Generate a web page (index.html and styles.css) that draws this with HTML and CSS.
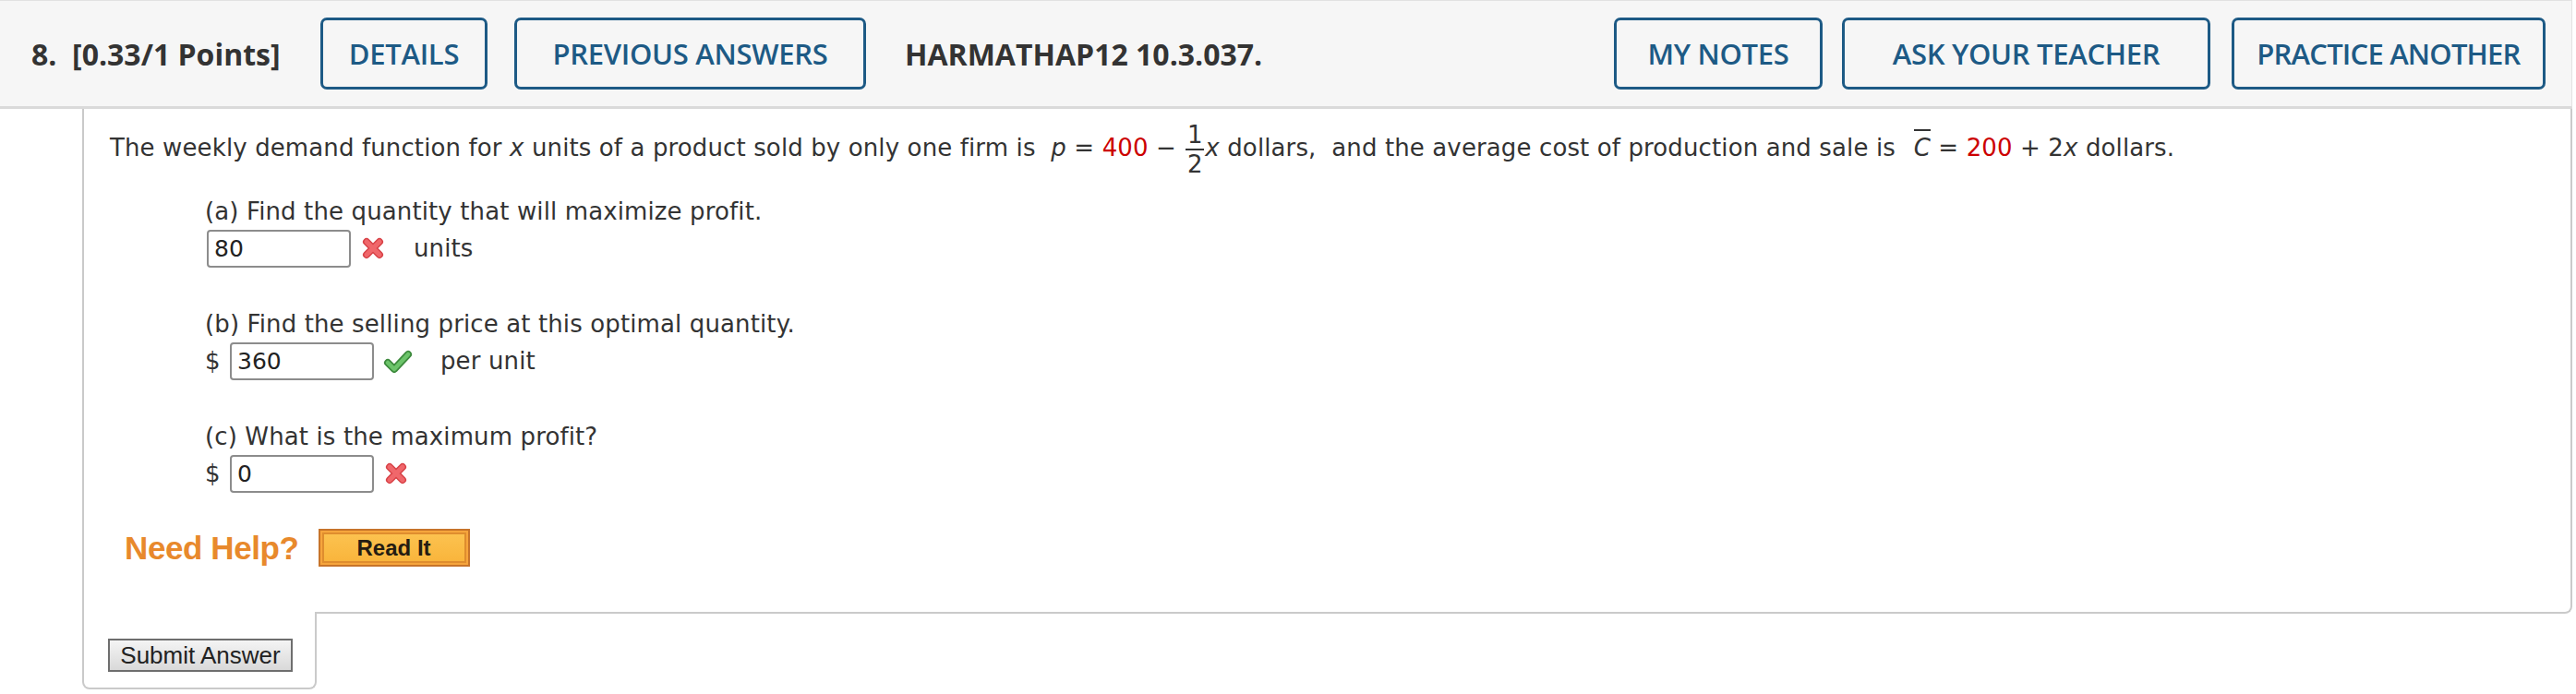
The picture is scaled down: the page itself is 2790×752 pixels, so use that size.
FILE: index.html
```html
<!DOCTYPE html>
<html lang="en">
<head>
<meta charset="utf-8">
<title>Question 8</title>
<link rel="stylesheet" href="styles.css">
</head>
<body>
<div class="page">
  <header class="qhead">
    <div class="qnum">8.&nbsp; [0.33/1 Points]</div>
    <button class="hbtn w-details">DETAILS</button>
    <button class="hbtn w-prev">PREVIOUS ANSWERS</button>
    <div class="qcode">HARMATHAP12 10.3.037.</div>
    <div class="spacer"></div>
    <button class="hbtn w-notes">MY NOTES</button>
    <button class="hbtn w-ask">ASK YOUR TEACHER</button>
    <button class="hbtn w-practice">PRACTICE ANOTHER</button>
  </header>

  <section class="qbox">
    <p class="stem">The weekly demand function for <i>x</i> units of a product sold by only one firm is&nbsp; <i>p</i> = <span class="red">400</span> &minus; <span class="frac"><span class="num">1</span><span class="bar"></span><span class="den">2</span></span><i>x</i> dollars,&nbsp; and the average cost of production and sale is&nbsp; <span class="cbar"><i>C</i></span> = <span class="red">200</span> + 2<i>x</i> dollars.</p>

    <div class="part">
      <div class="label">(a) Find the quantity that will maximize profit.</div>
      <div class="row">
        <input class="ans first" type="text" value="80" readonly>
        <svg class="mark x" viewBox="0 0 28 28" width="28" height="28"><path d="M7 7 L21 21 M21 7 L7 21" stroke="#d84348" stroke-width="8" stroke-linecap="round"/><path d="M7 7 L21 21 M21 7 L7 21" stroke="#f0676b" stroke-width="5" stroke-linecap="round"/></svg>
        <span class="unit">units</span>
      </div>
    </div>

    <div class="part gap">
      <div class="label">(b) Find the selling price at this optimal quantity.</div>
      <div class="row">
        <span class="dollar">$</span>
        <input class="ans" type="text" value="360" readonly>
        <svg class="mark chk" viewBox="0 0 32 28" width="32" height="28"><path d="M5 16 L12 23 L27 7" stroke="#3d8a3d" stroke-width="8" fill="none" stroke-linecap="round" stroke-linejoin="round"/><path d="M5 16 L12 23 L27 7" stroke="#6cc46a" stroke-width="4.5" fill="none" stroke-linecap="round" stroke-linejoin="round"/></svg>
        <span class="unit">per unit</span>
      </div>
    </div>

    <div class="part gap">
      <div class="label">(c) What is the maximum profit?</div>
      <div class="row">
        <span class="dollar">$</span>
        <input class="ans" type="text" value="0" readonly>
        <svg class="mark x" viewBox="0 0 28 28" width="28" height="28"><path d="M7 7 L21 21 M21 7 L7 21" stroke="#d84348" stroke-width="8" stroke-linecap="round"/><path d="M7 7 L21 21 M21 7 L7 21" stroke="#f0676b" stroke-width="5" stroke-linecap="round"/></svg>
      </div>
    </div>

    <div class="help">
      <span class="needhelp">Need Help?</span>
      <button class="readit"><span>Read It</span></button>
    </div>
  </section>

  <div class="subtab">
    <button class="submit">Submit Answer</button>
  </div>
</div>
</body>
</html>
```

FILE: styles.css
```css
html, body {
  margin: 0;
  padding: 0;
  background: #ffffff;
}

.page {
  width: 2786px;
}

.qhead {
  display: flex;
  align-items: center;
  height: 114px;
  padding: 0 28px 0 34px;
  background: #f6f6f6;
  border-top: 1px solid #e2e2e2;
  border-bottom: 3px solid #dadada;
  border-right: 1px solid #e2e2e2;
  font-family: "Open Sans", "Liberation Sans", sans-serif;
  font-weight: 700;
  font-size: 32px;
  color: #333333;
}

.qnum {
  width: 268px;
  white-space: nowrap;
  margin-right: 45px;
}

.hbtn {
  height: 78px;
  border: 3px solid #1d5a85;
  border-radius: 7px;
  background: transparent;
  color: #1d5a85;
  font-family: "Open Sans", "Liberation Sans", sans-serif;
  font-weight: 600;
  font-size: 31px;
  letter-spacing: -0.3px;
  padding: 0;
  text-align: center;
  white-space: nowrap;
}

.w-details { width: 181px; margin-right: 29px; }
.w-prev { width: 381px; margin-right: 42px; }
.w-notes { width: 226px; margin-right: 21px; }
.w-ask { width: 399px; margin-right: 23px; }
.w-practice { width: 340px; letter-spacing: -0.8px; }

.qcode {
  white-space: nowrap;
}

.spacer {
  flex: 1;
}

.qbox {
  margin-left: 89px;
  border: 2px solid #cacaca;
  border-top: none;
  border-bottom-right-radius: 8px;
  padding: 1px 28px 49px 28px;
  font-family: Verdana, "DejaVu Sans", sans-serif;
  font-size: 26px;
  letter-spacing: 0.12px;
  color: #333333;
}

.stem {
  margin: 0;
  height: 80px;
  line-height: 82px;
  white-space: nowrap;
}

.red {
  color: #cc0000;
}

.frac {
  display: inline-flex;
  flex-direction: column;
  align-items: center;
  vertical-align: middle;
  width: 20px;
  margin: 0 1px 0 2px;
  line-height: 30px;
}

.frac .bar {
  align-self: stretch;
  height: 2px;
  background: #333333;
}

.cbar {
  display: inline-block;
  line-height: 1;
  padding-top: 5px;
  border-top: 2px solid #333333;
  margin-left: 3px;
}

.part {
  margin-left: 103px;
  margin-top: 12px;
}

.part.gap {
  margin-top: 42px;
}

.label {
  line-height: 36px;
  height: 36px;
  white-space: nowrap;
}

.row {
  display: flex;
  align-items: center;
  height: 44px;
}

.ans {
  box-sizing: border-box;
  width: 156px;
  height: 41px;
  border: 2px solid #8c8c8c;
  border-radius: 4px;
  padding: 0 6px;
  font-family: Verdana, "DejaVu Sans", sans-serif;
  font-size: 25px;
  color: #222222;
  background: #ffffff;
  outline: none;
}

.ans.first {
  margin-left: 2px;
}

.dollar {
  width: 27px;
}

.mark.x {
  margin-left: 10px;
}

.mark.chk {
  margin-left: 10px;
}

.unit {
  margin-left: 30px;
}

.help {
  display: flex;
  align-items: center;
  margin: 38px 0 0 16px;
  height: 41px;
}

.needhelp {
  font-family: "Liberation Sans", Arial, sans-serif;
  font-weight: 700;
  font-size: 35px;
  color: #e8892c;
  letter-spacing: -0.4px;
}

.readit {
  box-sizing: border-box;
  margin-left: 21px;
  width: 164px;
  height: 41px;
  padding: 2px;
  border: 2px solid #c7742a;
  background: #f6a53c;
  display: flex;
}

.readit span {
  flex: 1;
  display: flex;
  align-items: center;
  justify-content: center;
  border: 2px solid #df8d2e;
  background: linear-gradient(#fcc24f, #f9b53c);
  font-family: "Liberation Sans", Arial, sans-serif;
  font-weight: 700;
  font-size: 24px;
  color: #241c12;
}

.subtab {
  margin-left: 89px;
  margin-top: -2px;
  width: 200px;
  border: 2px solid #cacaca;
  border-top: none;
  border-radius: 0 0 8px 8px;
  background: #ffffff;
  padding: 29px 24px 17px 26px;
}

.submit {
  display: block;
  box-sizing: border-box;
  width: 200px;
  height: 36px;
  padding: 0;
  border: 2px solid #6e6e6e;
  background: linear-gradient(#f4f4f4, #d9d9d9);
  font-family: "Liberation Sans", Arial, sans-serif;
  font-size: 26px;
  color: #222222;
}
```
